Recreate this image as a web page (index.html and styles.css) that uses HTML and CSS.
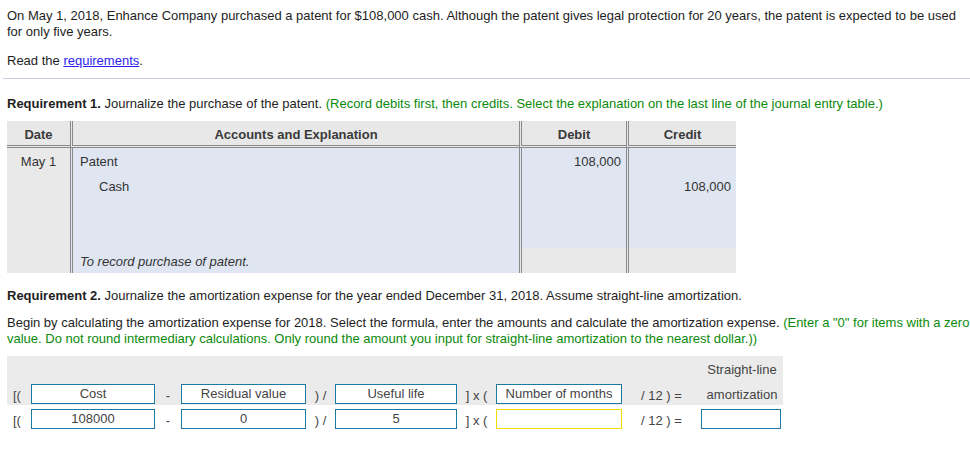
FILE: index.html
```html
<!DOCTYPE html>
<html>
<head>
<meta charset="utf-8">
<link rel="stylesheet" href="styles.css">
</head>
<body>
<div class="page">
  <p class="intro">On May 1, 2018, Enhance Company purchased a patent for $108,000 cash. Although the patent gives legal protection for 20 years, the patent is expected to be used for only five years.</p>
  <p class="read">Read the <a class="link" href="#">requirements</a>.</p>
  <div class="sep"></div>
  <p class="req1"><b>Requirement 1.</b> Journalize the purchase of the patent. <span class="green">(Record debits first, then credits. Select the explanation on the last line of the journal entry table.)</span></p>

  <table class="journal">
    <thead>
      <tr>
        <th class="c-date">Date</th>
        <th class="c-acc">Accounts and Explanation</th>
        <th class="c-deb">Debit</th>
        <th class="c-cred">Credit</th>
      </tr>
    </thead>
    <tbody>
      <tr>
        <td class="c-date date">May 1</td>
        <td class="c-acc acc">Patent</td>
        <td class="c-deb amt">108,000</td>
        <td class="c-cred amt"></td>
      </tr>
      <tr>
        <td class="c-date date"></td>
        <td class="c-acc acc indent">Cash</td>
        <td class="c-deb amt"></td>
        <td class="c-cred amt">108,000</td>
      </tr>
      <tr>
        <td class="c-date date"></td>
        <td class="c-acc acc"></td>
        <td class="c-deb amt"></td>
        <td class="c-cred amt"></td>
      </tr>
      <tr>
        <td class="c-date date"></td>
        <td class="c-acc acc"></td>
        <td class="c-deb amt"></td>
        <td class="c-cred amt"></td>
      </tr>
      <tr class="last">
        <td class="c-date date"></td>
        <td class="c-acc acc expl">To record purchase of patent.</td>
        <td class="c-deb amt grey"></td>
        <td class="c-cred amt grey"></td>
      </tr>
    </tbody>
  </table>

  <p class="req2"><b>Requirement 2.</b> Journalize the amortization expense for the year ended December 31, 2018. Assume straight-line amortization.</p>
  <p class="begin">Begin by calculating the amortization expense for 2018. Select the formula, enter the amounts and calculate the amortization expense. <span class="green">(Enter a "0" for items with a zero value. Do not round intermediary calculations. Only round the amount you input for straight-line amortization to the nearest dollar.))</span></p>

  <div class="formula">
    <div class="fbox">
      <div class="frow fhead">
        <span></span><span></span><span></span><span></span><span></span>
        <span></span><span></span><span></span><span></span>
        <span class="lbl">Straight-line</span>
      </div>
      <div class="frow">
        <span class="sym left">[(</span>
        <span class="box">Cost</span>
        <span class="sym">-</span>
        <span class="box">Residual value</span>
        <span class="sym">) /</span>
        <span class="box">Useful life</span>
        <span class="sym">] x (</span>
        <span class="box">Number of months</span>
        <span class="sym">/ 12 ) =</span>
        <span class="lbl lbl2">amortization</span>
      </div>
    </div>
    <div class="frow frow2">
      <span class="sym left">[(</span>
      <span class="box">108000</span>
      <span class="sym">-</span>
      <span class="box">0</span>
      <span class="sym">) /</span>
      <span class="box">5</span>
      <span class="sym">] x (</span>
      <span class="box yellow"></span>
      <span class="sym">/ 12 ) =</span>
      <span class="box small"></span>
    </div>
  </div>
</div>
</body>
</html>
```

FILE: styles.css
```css
html, body {
  margin: 0;
  padding: 0;
  overflow: hidden;
  background: #ffffff;
}

body {
  font-family: "Liberation Sans", Arial, sans-serif;
  font-size: 13px;
  line-height: 16px;
  color: #1e1e1e;
}

.page {
  padding: 8px 0 0 7px;
  width: 965px;
}

p {
  margin: 0;
}

.read {
  margin-top: 13px;
}

.link {
  color: #2c1df0;
  text-decoration: underline;
}

.sep {
  margin: 9px 0 0 -4px;
  height: 1px;
  background: #c9d0e2;
  width: 1000px;
}

.req1 {
  margin-top: 17px;
}

.green {
  color: #0b8a0b;
}

/* Journal table */
.journal {
  margin-top: 9px;
  border-collapse: separate;
  border-spacing: 0;
  table-layout: fixed;
  width: 729px;
  color: #333;
}

.journal th,
.journal td {
  padding: 0;
  vertical-align: top;
  box-sizing: border-box;
}

.journal th {
  height: 27px;
  padding-top: 6px;
  background: #e8e8e8;
  font-weight: bold;
  color: #3a3a3a;
  text-align: center;
  border-bottom: 3px double #8a8a8a;
}

.journal td {
  height: 25px;
  padding-top: 6px;
}

.journal .c-date { width: 63px; }
.journal .c-acc  { width: 449px; border-left: 3px double #8a8a8a; }
.journal .c-deb  { width: 107px; border-left: 3px double #8a8a8a; }
.journal .c-cred { width: 110px; border-left: 3px double #8a8a8a; }

.journal td.date {
  background: #e9e9e9;
  text-align: center;
}

.journal td.acc {
  background: #dfe6f2;
  padding-left: 7px;
}

.journal td.indent {
  padding-left: 26px;
}

.journal td.expl {
  font-style: italic;
}

.journal td.amt {
  background: #dfe6f2;
  text-align: right;
  padding-right: 5px;
}

.journal td.grey {
  background: #e9e9e9;
}

.req2 {
  margin-top: 15px;
}

.begin {
  margin-top: 11px;
}

/* Formula */
.formula {
  margin-top: 9px;
  width: 776px;
  color: #444;
}

.fbox {
  background: #ebebeb;
  padding-bottom: 1px;
}

.frow {
  display: grid;
  grid-template-columns: 24px 124px 26px 125px 29px 122px 39px 126px 79px 82px;
  align-items: start;
}

.fhead {
  height: 26px;
}

.fhead .lbl {
  padding-top: 6px;
}

.lbl {
  text-align: center;
}

.lbl2 {
  padding-top: 5px;
}

.frow .sym {
  text-align: center;
  padding-top: 6px;
}

.frow .sym.left {
  text-align: left;
  padding-left: 6px;
}

.box {
  display: block;
  box-sizing: border-box;
  height: 20px;
  margin-top: 2px;
  border: 1px solid #1b79a4;
  background: #ffffff;
  text-align: center;
  line-height: 17px;
  color: #444;
}

.box.yellow {
  border-color: #f2db00;
}

.box.small {
  width: 80px;
}

.frow2 {
  margin-top: 2px;
}
```
